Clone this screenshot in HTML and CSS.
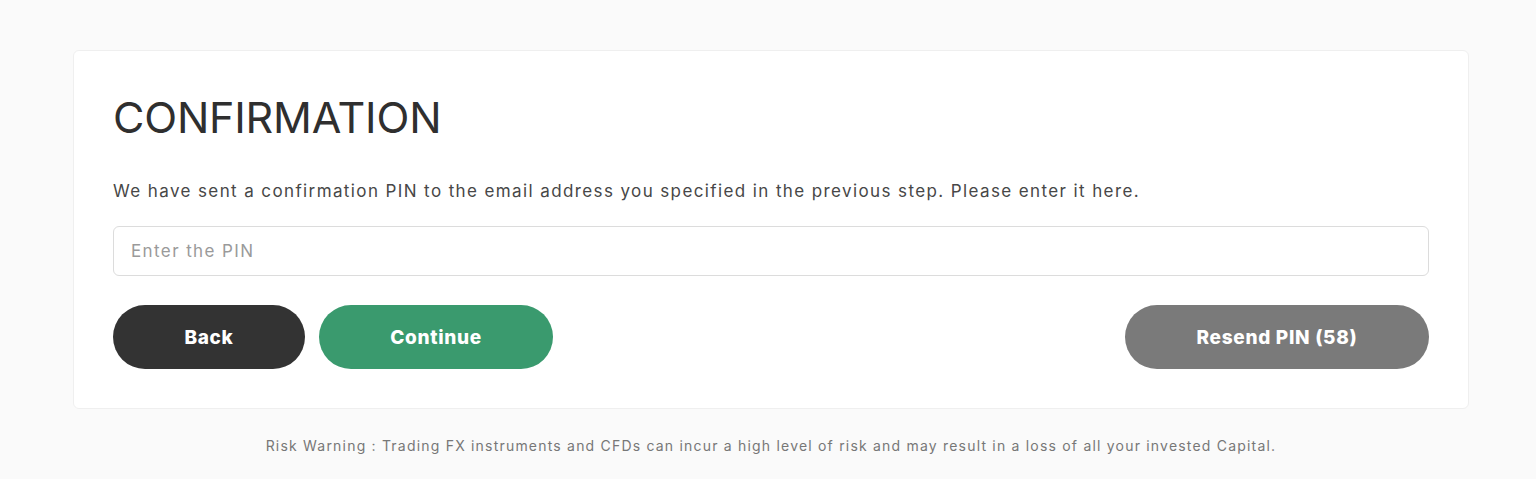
FILE: index.html
```html
<!DOCTYPE html>
<html lang="en">
<head>
<meta charset="utf-8">
<title>Confirmation</title>
<link rel="stylesheet" href="styles.css">
</head>
<body>
<div class="page">
  <div class="card">
    <h1 class="title">CONFIRMATION</h1>
    <p class="lead">We have sent a confirmation PIN to the email address you specified in the previous step. Please enter it here.</p>
    <input class="pin" type="text" placeholder="Enter the PIN">
    <div class="actions">
      <button class="btn btn-back">Back</button>
      <button class="btn btn-continue">Continue</button>
      <button class="btn btn-resend">Resend PIN (58)</button>
    </div>
  </div>
  <p class="risk">Risk Warning : Trading FX instruments and CFDs can incur a high level of risk and may result in a loss of all your invested Capital.</p>
</div>
</body>
</html>
```

FILE: styles.css
```css
html, body {
  margin: 0;
  padding: 0;
}
body {
  background: #fafafa;
  font-family: Inter, "Noto Sans", sans-serif;
  color: #333;
  height: 479px;
  overflow: hidden;
}
.page {
  padding: 50px 67px 0 73px;
}
.card {
  background: #fff;
  border: 1px solid #efefef;
  border-radius: 6px;
  padding: 40px 39px 39px 39px;
}
.title {
  margin: 0;
  font-size: 43px;
  font-weight: 400;
  line-height: 52px;
  color: #2f2f2f;
  letter-spacing: -0.2px;
}
.lead {
  margin: 36px 0 0;
  font-size: 17px;
  line-height: 24px;
  color: #474747;
  letter-spacing: 1.39px;
}
.pin {
  display: block;
  box-sizing: border-box;
  width: 100%;
  height: 50px;
  margin-top: 23px;
  border: 1px solid #dcdcdc;
  border-radius: 6px;
  padding: 0 17px;
  font-family: Inter, "Noto Sans", sans-serif;
  font-size: 17px;
  letter-spacing: 1.4px;
  color: #333;
  outline: none;
}
.pin::placeholder {
  color: #9a9a9a;
}
.actions {
  display: flex;
  gap: 14px;
  margin-top: 29px;
}
.btn {
  height: 64px;
  border: none;
  border-radius: 32px;
  color: #fff;
  font-family: Inter, "Noto Sans", sans-serif;
  font-size: 19px;
  font-weight: 800;
  letter-spacing: 0.7px;
  cursor: pointer;
  padding: 0;
}
.btn-back {
  width: 192px;
  background: #333;
}
.btn-continue {
  width: 234px;
  background: #3a9a6e;
}
.btn-resend {
  width: 304px;
  margin-left: auto;
  background: #7a7a7a;
}
.risk {
  margin: 27px 0 0;
  text-align: center;
  font-size: 14px;
  line-height: 20px;
  color: #777;
  letter-spacing: 1.2px;
}
```
